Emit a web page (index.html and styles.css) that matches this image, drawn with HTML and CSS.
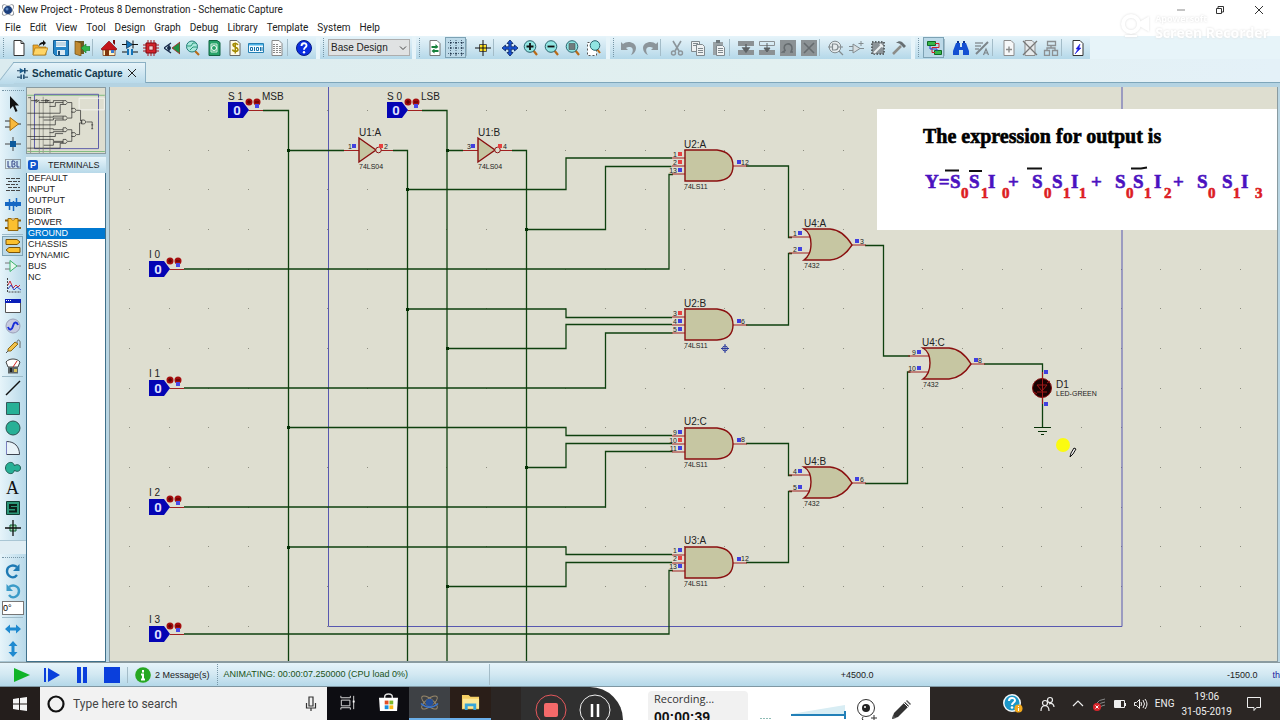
FILE: index.html
```html
<!DOCTYPE html>
<html lang="en">
  <head>
    <meta charset="UTF-8" />
    <meta name="viewport" content="width=device-width, initial-scale=1.0" />
    <title>New Project - Proteus 8 Demonstration - Schematic Capture</title>
    <link rel="stylesheet" href="styles.css">
  </head>
  <body>
    <!-- Title bar -->
    <header class="titlebar">
      <svg class="app-icon" viewBox="0 0 14 14"><g fill="none" stroke="#8a8f96"><ellipse cx="7" cy="7" rx="7" ry="3" transform="rotate(42 7 7)"/><ellipse cx="7" cy="7" rx="7" ry="3" transform="rotate(-42 7 7)"/></g><circle cx="7" cy="7" r="4" fill="#1c3f7c"/><circle cx="6" cy="6" r="1.5" fill="#5f8ac4"/></svg>
      <h1 class="title">New Project - Proteus 8 Demonstration - Schematic Capture</h1>
      <div class="window-buttons">
        <button aria-label="Minimize"><svg viewBox="0 0 10 10"><path d="M1 5h8" stroke="#888"/></svg></button>
        <button aria-label="Restore"><svg viewBox="0 0 10 10"><path d="M1.500 3.500h5v5h-5zM3 3V1.500h5.500V7H7" fill="none" stroke="#333"/></svg></button>
        <button aria-label="Close"><svg viewBox="0 0 10 10"><path d="M1 1l8 8M9 1L1 9" stroke="#333"/></svg></button>
      </div>
    </header>

    <nav class="menubar">
      <a href="#">File</a><a href="#">Edit</a><a href="#">View</a><a href="#">Tool</a><a href="#">Design</a><a href="#">Graph</a><a href="#">Debug</a><a href="#">Library</a><a href="#">Template</a><a href="#">System</a><a href="#">Help</a>
    </nav>

    <!-- Toolbars -->
    <div class="toolbars">
      <div class="toolbar">
        <button aria-label="New"><svg viewBox="0 0 16 16"><path d="M3 .5h7l3 3v12H3z" fill="#fff" stroke="#333"/><path d="M10 .5v3h3" fill="none" stroke="#333"/></svg></button>
        <button aria-label="Open"><svg viewBox="0 0 16 16"><path d="M1 5h5l1 2h7v8H1z" fill="#f0a92c" stroke="#9a6a10" stroke-width=".7"/><path d="M3 8h13l-3 7H1z" fill="#ffd566" stroke="#a97514" stroke-width=".7"/><path d="M7 6c0-3 2-4 4-4V0l3 3-3 3V4C9 4 8 5 7 6z" fill="#111"/></svg></button>
        <button aria-label="Save"><svg viewBox="0 0 16 16"><path d="M.5 .5h15v15h-13l-2-2z" fill="#2586c9" stroke="#145d94"/><path d="M3 1h10v6H3z" fill="#eef6fb"/><path d="M3 3h10M3 5h10" stroke="#8fb6cf"/><path d="M4 10h8v5H4z" fill="#dbe9f2"/><path d="M5 11h2v4H5z" fill="#244d6e"/></svg></button>
        <button aria-label="Exit"><svg viewBox="0 0 16 16"><path d="M1 1h9v13H1z" fill="#6e5a24"/><path d="M1 1l6 2v13l-6-2z" fill="#c08a32" stroke="#6b4a10" stroke-width=".7"/><path d="M7 8l5-4v2.500h4v4h-4V13z" fill="#2fb34a" stroke="#127a2a" stroke-width=".6"/></svg></button>
        <span class="separator"></span>
        <button aria-label="Home"><svg viewBox="0 0 16 16"><path d="M2 8h12v7.500H2z" fill="#fff3c4" stroke="#7c3b16" stroke-width=".8"/><path d="M0 9l8-8 8 8-1 1H1z" fill="#c3161c" stroke="#7b0b0f" stroke-width=".6"/><path d="M12 0h2v5l-2-2z" fill="#7b0b0f"/><path d="M4 10h4v6H4z" fill="#80360f"/><path d="M10 10h3v3h-3z" fill="#3a7bd0"/></svg></button>
        <button aria-label="Schematic Capture"><svg viewBox="0 0 16 16"><path d="M0 4.500h16M0 12h5.500M10.500 12H16" stroke="#111"/><path d="M4.500 .5v8l6-4z" fill="#1473b8" stroke="#092f50" stroke-width=".7"/><path d="M11 .5v8" stroke="#111"/><path d="M5 9h2v6H5zM9 9h2v6H9z" fill="#1473b8"/></svg></button>
        <button aria-label="PCB Layout"><svg viewBox="0 0 16 16"><path d="M5 0v16M8 0v16M11 0v16M0 5h16M0 8h16M0 11h16" stroke="#a3131a"/><path d="M3 3h10v10H3z" fill="#d3232b" stroke="#7d0c12"/><path d="M6 6h4v4H6z" fill="#f6d6d6" stroke="#7d0c12" stroke-width=".6"/></svg></button>
        <button aria-label="3D Visualizer"><svg viewBox="0 0 16 16"><path d="M7 3L0 8l7 5M5 4v8" fill="none" stroke="#182b4a" stroke-width="1.300"/><circle cx="5" cy="8" r="2" fill="#182b4a"/><path d="M16 2v12L8 8z" fill="#1d9044" stroke="#b32020" stroke-width=".8"/></svg></button>
        <button aria-label="Gerber Viewer"><svg viewBox="0 0 16 16"><path d="M10 11l4 4" stroke="#ba6a16" stroke-width="2.200"/><circle cx="7" cy="6.500" r="5.500" fill="#a9e7dc" stroke="#257d78"/><path d="M2 6h4l2-3h3M5 10l3-3h4" fill="none" stroke="#2b9a79"/></svg></button>
        <button aria-label="Design Explorer"><svg viewBox="0 0 16 16"><path d="M3 .5h8l3 2v13H3z" fill="#28a269" stroke="#116340"/><path d="M5 4h6v8H5z" fill="none" stroke="#d6f4e4"/><circle cx="8" cy="8" r="2.500" fill="#28a269" stroke="#fff"/></svg></button>
        <button aria-label="Bill of Materials"><svg viewBox="0 0 16 16"><path d="M3 .5h7l3 3v12H3z" fill="#fffbe6" stroke="#666"/><path d="M11 5c-1-2-5-2-5 0s5 2 5 4.500-5 2.500-5.500 0M8.300 2.500v11" fill="none" stroke="#a38a00" stroke-width="1.500"/></svg></button>
        <button aria-label="Source Code"><svg viewBox="0 0 16 16"><path d="M.5 3.500h15v9H.5z" fill="#f3fbff" stroke="#2580b5"/><path d="M1 4h14v1.500H1z" fill="#4ab2e6"/><path d="M2.500 7.500h2v3h-2zM6.500 7v4M8.500 7.500h2v3h-2zM12.500 7v4M14 7v4" fill="none" stroke="#1771a8"/></svg></button>
        <button aria-label="Project Notes"><svg viewBox="0 0 16 16"><path d="M3 .5h7l3 3v12H3z" fill="#fafafa" stroke="#888"/><path d="M4 4.500h5M4 6.500h8M4 8.500h8M4 10.500h8M4 12.500h8" stroke="#888" stroke-dasharray="2 1"/></svg></button>
        <span class="separator"></span>
        <button aria-label="Help"><svg viewBox="0 0 16 16"><circle cx="8" cy="8" r="7.500" fill="#0a2de0" stroke="#061a86"/><path d="M5.500 6c0-3.500 5-3.500 5-.6 0 2-2.500 2-2.500 4.300" fill="none" stroke="#fff" stroke-width="1.900"/><circle cx="8" cy="12.200" r="1.200" fill="#fff"/></svg></button>
      </div>

      <div class="toolbar">
        <label class="variant">
          <select aria-label="Design variant"><option>Base Design</option></select>
          <svg viewBox="0 0 8 8"><path d="M1 2.500l3 3 3-3" fill="none" stroke="#444"/></svg>
        </label>
      </div>

      <div class="toolbar">
        <button aria-label="Redraw"><svg viewBox="0 0 16 16"><path d="M3 .5h7l3 3v12H3z" fill="#fff" stroke="#777"/><path d="M4.500 6h4V4l3 3-3 2V8h-4zM11.500 10h-4V8.500l-3 2.500 3 2.500V12h4z" fill="#15803a"/></svg></button>
        <button class="pressed" aria-label="Toggle grid"><svg viewBox="0 0 16 16"><path d="M0 2.500h16M0 8h16M0 13.500h16M2.500 0v16M8 0v16M13.500 0v16" stroke="#31475e" stroke-dasharray="1 1.500" stroke-width=".8"/><path d="M2 2h1.500v1.500H2zM7.300 2h1.500v1.500H7.300zM13 2h1.500v1.500H13zM2 7.300h1.500v1.500H2zM7.300 7.300h1.500v1.500H7.300zM13 7.300h1.500v1.500H13zM2 13h1.500v1.500H2zM7.300 13h1.500v1.500H7.300zM13 13h1.500v1.500H13z" fill="#1f3348"/></svg></button>
        <span class="separator"></span>
        <button aria-label="Origin"><svg viewBox="0 0 16 16"><path d="M4.500 4.500h7v7h-7z" fill="#ffe326" stroke="#555"/><path d="M0 8h16M8 0v16" stroke="#111"/></svg></button>
        <span class="separator"></span>
        <button aria-label="Pan"><svg viewBox="0 0 16 16"><path d="M8 0l3 3.500H9.200v3.300h3.300V5L16 8l-3.500 3V9.200H9.200v3.300H11L8 16l-3-3.500h1.800V9.200H3.500V11L0 8l3.500-3v1.800h3.300V3.500H5z" fill="#1854d8" stroke="#071f5c" stroke-width=".8"/></svg></button>
        <button aria-label="Zoom in"><svg viewBox="0 0 16 16"><path d="M10 10l4 5" stroke="#ba6a16" stroke-width="2.200"/><circle cx="7" cy="6.500" r="5.800" fill="#90e5e2" stroke="#27636c"/><path d="M3.500 6.500h7M7 3v7" stroke="#111" stroke-width="1.800"/></svg></button>
        <button aria-label="Zoom out"><svg viewBox="0 0 16 16"><path d="M10 10l4 5" stroke="#ba6a16" stroke-width="2.200"/><circle cx="7" cy="6.500" r="5.800" fill="#90e5e2" stroke="#27636c"/><path d="M3.500 6.500h7" stroke="#111" stroke-width="1.800"/></svg></button>
        <button aria-label="Zoom all"><svg viewBox="0 0 16 16"><path d="M10 10l4 5" stroke="#ba6a16" stroke-width="2.200"/><circle cx="7" cy="6.500" r="5.800" fill="#90e5e2" stroke="#27636c"/><path d="M4 3.500h6v6H4z" fill="#707b7c" stroke="#4a5556" stroke-width=".6"/></svg></button>
        <button aria-label="Zoom area"><svg viewBox="0 0 16 16"><path d="M1.500 2.500h9v13h-9z" fill="#fff" stroke="#555" stroke-dasharray="2 2"/><path d="M11 9l3 4" stroke="#ba6a16" stroke-width="2"/><circle cx="9" cy="5.500" r="4.800" fill="#90e5e2" stroke="#27636c"/></svg></button>
      </div>

      <div class="toolbar">
        <button aria-label="Undo"><svg viewBox="0 0 16 16"><path d="M0 2l2 2c4-4 13-2 13 4 0 3-2 6-5 7 3-4 2-8-1-8-2 0-3 0-4 1l2 2H0z" fill="#8c959b"/></svg></button>
        <button aria-label="Redo"><svg viewBox="0 0 16 16"><path d="M16 2l-2 2C10 0 1 2 1 8c0 3 2 6 5 7-3-4-2-8 1-8 2 0 3 0 4 1l-2 2h7z" fill="#8c959b"/></svg></button>
        <span class="separator"></span>
        <button aria-label="Cut"><svg viewBox="0 0 16 16"><path d="M4 1l6 10M12 1L6 11" stroke="#8c959b" stroke-width="1.600"/><circle cx="4.500" cy="13" r="2" fill="none" stroke="#8c959b" stroke-width="1.400"/><circle cx="11.500" cy="13" r="2" fill="none" stroke="#8c959b" stroke-width="1.400"/></svg></button>
        <button aria-label="Copy"><svg viewBox="0 0 16 16"><path d="M1.500 1.500h8v10h-8z" fill="#eef1f2" stroke="#7f888d"/><path d="M6.500 4.500h6l2 2v9h-8z" fill="#eef1f2" stroke="#7f888d"/><path d="M3 3.500h5M3 5.500h3M8 8.500h5M8 10.500h5M8 12.500h5" stroke="#7f888d"/></svg></button>
        <button aria-label="Paste"><svg viewBox="0 0 16 16"><path d="M2 2h10v13H2z" fill="#9aa2a6"/><path d="M5 0h4v3H5z" fill="#6f787c"/><path d="M5.500 5.500h6l2 2v8h-8z" fill="#f1f3f4" stroke="#7f888d"/><path d="M7 8.500h5M7 10.500h5M7 12.500h5" stroke="#7f888d"/></svg></button>
        <span class="separator"></span>
        <button aria-label="Block copy"><svg viewBox="0 0 16 16"><path d="M0 1h16v5H0zM0 10h16v5H0z" fill="#8b9194"/><path d="M8 4v6M5 8l3 4 3-4z" fill="#5d6265" stroke="#5d6265" stroke-width="1.400"/></svg></button>
        <button aria-label="Block move"><svg viewBox="0 0 16 16"><path d="M.5 1.500h15v4H.5z" fill="none" stroke="#8b9194"/><path d="M0 10h16v5H0z" fill="#8b9194"/><path d="M8 3v7M5 8l3 4 3-4z" fill="#5d6265" stroke="#5d6265"/></svg></button>
        <button aria-label="Block rotate"><svg viewBox="0 0 16 16"><path d="M0 0h16v16H0z" fill="#8b9194"/><path d="M5 12H3l2-1.500C1 3 13 1 12 9l-1 3h2" fill="none" stroke="#666c6f" stroke-width="1.600"/></svg></button>
        <button aria-label="Block delete"><svg viewBox="0 0 16 16"><path d="M0 0h16v16H0z" fill="#8b9194"/><path d="M3 3l10 10M13 3L3 13" stroke="#666c6f" stroke-width="1.600"/></svg></button>
        <span class="separator"></span>
        <button aria-label="Pick parts"><svg viewBox="0 0 16 16"><circle cx="7" cy="7" r="5.800" fill="#e6ecee" stroke="#838c90"/><path d="M0 7h4M4.500 4v6h2.500c4 0 4-6 0-6zM10 7h5M11 11l4 4" fill="none" stroke="#838c90" stroke-width="1.200"/></svg></button>
        <button aria-label="Make device"><svg viewBox="0 0 16 16"><path d="M4 4v9l7-4.500zM0 6.500h4M0 10.500h4M11 8.500h4" fill="#d7dee1" stroke="#838c90"/><path d="M12 1v5M9.500 3.500h5" stroke="#838c90"/></svg></button>
        <button aria-label="Packaging tool"><svg viewBox="0 0 16 16"><path d="M2 2h12v12H2z" fill="#8c9499" stroke="#5d6568" stroke-width="2" stroke-dasharray="1.500 1.500"/><path d="M4 13l7-7M10 4l3 3" stroke="#e9eef0" stroke-width="2"/></svg></button>
        <button aria-label="Decompose"><svg viewBox="0 0 16 16"><path d="M2 14l8-8" stroke="#8c8c88" stroke-width="2.500"/><path d="M5 3c3-3 6-2 8 1l2 2-2 2-3-3C8 3 7 3 5 3z" fill="#666e72"/></svg></button>
      </div>

      <div class="toolbar">
        <button class="pressed" aria-label="Wire autorouter"><svg viewBox="0 0 16 16"><path d="M1.500 1.500h8v4h-8zM8.500 10.500h7v4h-7z" fill="#38b54a" stroke="#0e6b20"/><path d="M9 3.500h4v4H6v5h3" fill="none" stroke="#d0202a"/><path d="M4 6v3h7v2" fill="none" stroke="#2336d0"/></svg></button>
        <span class="separator"></span>
        <button aria-label="Search and tag"><svg viewBox="0 0 16 16"><path d="M3 3h4v4h2V3h4l3 8v4H10v-5H6v5H0v-4z" fill="#1450d2"/><path d="M4 1h2v2H4zM10 1h2v2h-2z" fill="#0b2f86"/></svg></button>
        <button aria-label="Property assignment"><svg viewBox="0 0 16 16"><path d="M1 3h8M1 6h6M1 9h4" stroke="#8c959b" stroke-width="1.500"/><path d="M2 14L14 2" stroke="#7c858a" stroke-width="2"/><path d="M9.500 15l2.500-6 2.500 6M10 13h4" fill="none" stroke="#7c858a" stroke-width="1.200"/></svg></button>
        <span class="separator"></span>
        <button aria-label="New sheet"><svg viewBox="0 0 16 16"><path d="M3 .5h7l3 3v12H3z" fill="#f6f8f9" stroke="#8b8b8b"/><path d="M5 9.500h6M8 6.500v6" stroke="#8b8b8b" stroke-width="1.400"/></svg></button>
        <button aria-label="Remove sheet"><svg viewBox="0 0 16 16"><path d="M3 .5h7l3 3v12H3z" fill="#e6eaec" stroke="#8b8b8b"/><path d="M1 1l14 14M15 1L1 15" stroke="#777" stroke-width="1.300"/></svg></button>
        <button aria-label="Parent sheet"><svg viewBox="0 0 16 16"><path d="M4.500 1.500h8v4h-8zM1.500 10.500h5v5h-5zM9.500 10.500h5v5h-5zM8 6v2M4 10V8h8v2" fill="none" stroke="#8b8f92" stroke-width="1.300"/></svg></button>
        <span class="separator"></span>
        <button aria-label="Electrical rules"><svg viewBox="0 0 16 16"><path d="M3 .5h7l3 3v12H3z" fill="#fff" stroke="#333"/><path d="M10 4L6 9h2l-3 5 6-6H9z" fill="#1a1ae0" stroke="#1a1ae0" stroke-width=".5"/></svg></button>
      </div>
    </div>

    <!-- Document tabs -->
    <div class="tabstrip">
      <div class="tab">
        <svg class="tab-icon" viewBox="0 0 12 14"><path d="M0 4h12M0 11h4M8 11h4" stroke="#0b2e4c"/><path d="M3 1v6l5-3z" fill="#1a5c8c"/><path d="M8.500 1v6M4.500 8v5M7.500 8v5" stroke="#0b3d66" stroke-width="1.500"/></svg>
        <span>Schematic Capture</span>
        <button aria-label="Close tab"><svg viewBox="0 0 10 10"><path d="M1 1l8 8M9 1L1 9" stroke="#222"/></svg></button>
      </div>
    </div>

    <main class="workspace">
      <!-- Mode tools -->
      <div class="modes">
        <div class="modebar">
          <button aria-label="Selection"><svg viewBox="0 0 16 16"><path d="M5 0v13l3-3 2.500 6 2-1L10 9.500h4z" fill="#111"/></svg></button>
          <button aria-label="Component"><svg viewBox="0 0 16 16"><path d="M0 5h5M0 11h5M13 8h3" stroke="#333"/><path d="M5 1.500v13L13.500 8z" fill="#f9b93c" stroke="#a56c10"/></svg></button>
          <button aria-label="Junction dot"><svg viewBox="0 0 16 16"><path d="M0 8h16M8 1v14" stroke="#444"/><path d="M5 5h6v6H5z" fill="#0d5a9c"/></svg></button>
          <button aria-label="Wire label"><svg viewBox="0 0 16 16"><path d="M.5 3.500h15v9H.5z" fill="none" stroke="#555" stroke-dasharray="1 1"/><path d="M3 5v6h2.500M7 5v6h1.500c2 0 2-3 0-3 2 0 2-3 0-3zM12 5v6h2.500" fill="none" stroke="#2a3a80"/></svg></button>
          <button aria-label="Text script"><svg viewBox="0 0 16 16"><path d="M1 2.500h14M3 5.500h12M1 8.500h12M3 11.500h12M1 14.500h14" stroke="#444" stroke-dasharray="4 1"/></svg></button>
          <button aria-label="Bus"><svg viewBox="0 0 16 16"><path d="M0 8h16" stroke="#1668c4" stroke-width="4"/><path d="M4.500 3v11M8.500 5v10M11.500 2v9" stroke="#1668c4" stroke-width="1.500"/></svg></button>
          <button aria-label="Subcircuit"><svg viewBox="0 0 16 16"><path d="M0 4.500h16M0 12h16" stroke="#8a5c0a" stroke-width="2"/><path d="M3 2.500h10v12H3z" fill="#fbc02f" stroke="#94670d"/><path d="M6 2.500c0 2 4 2 4 0" fill="#fff" stroke="#94670d"/></svg></button>
          <span class="separator"></span>
          <button class="pressed" aria-label="Terminals"><svg viewBox="0 0 16 16"><path d="M1 1.500h11l3 2.500-3 2.500H1zM15 9.500H4L1 12l3 2.500h11z" fill="#fbc02f" stroke="#7c5509"/></svg></button>
          <button aria-label="Device pins"><svg viewBox="0 0 16 16"><path d="M0 5h5M0 11h5M12 8h4" stroke="#777"/><path d="M5 2.500v11l7-5.500z" fill="#e7f7ee" stroke="#3bb36b"/></svg></button>
          <button aria-label="Graph"><svg viewBox="0 0 16 16"><path d="M2.500 0v14H16" fill="none" stroke="#444" stroke-dasharray="2 1"/><path d="M3 7l2-4 3 7 3-3 2 2 2-2" fill="none" stroke="#cf2a3a"/><path d="M3 11l3-4 3 5 3-3 4 3" fill="none" stroke="#3546c4"/></svg></button>
          <button aria-label="Tape"><svg viewBox="0 0 16 16"><path d="M.5 1.500h15v13H.5z" fill="#fff" stroke="#555"/><path d="M0 1h16v4H0z" fill="#0b1fb8"/><path d="M1 2h1v1H1zM3 2h1v1H3zM5 2h1v1H5z" fill="#fff"/></svg></button>
          <button aria-label="Generator"><svg viewBox="0 0 16 16"><circle cx="8" cy="8" r="7" fill="#c7cbe0" stroke="#9aa0b8"/><path d="M3 9c1.500 4 4 3 5-1s3.500-5 5-1" fill="none" stroke="#1a2fd8" stroke-width="2"/></svg></button>
          <button aria-label="Probe"><svg viewBox="0 0 16 16"><path d="M1 15l3-3" stroke="#555"/><path d="M3 11l7-7 3 2-7 7-3 0z" fill="#f2c14a" stroke="#8d6a14"/><path d="M12 5c0-5 4-3 3 1v4" fill="none" stroke="#666"/></svg></button>
          <button aria-label="Instruments"><svg viewBox="0 0 16 16"><path d="M1 4c3-4 11-4 14 0l-2 5H3z" fill="#fff" stroke="#444"/><path d="M8 9l4-6" stroke="#d02020"/><path d="M3 9h10v6.500H3z" fill="#5d6466"/><path d="M5 10h2v4H5z" fill="#222"/><path d="M9 11h3v3H9z" fill="#d8c15a"/></svg></button>
          <span class="separator"></span>
          <button aria-label="Line"><svg viewBox="0 0 16 16"><path d="M1 15L15 1" stroke="#111" stroke-width="1.500"/></svg></button>
          <button aria-label="Box"><svg viewBox="0 0 16 16"><path d="M1.500 2.500h13v12h-13z" fill="#27b096" stroke="#34585a"/></svg></button>
          <button aria-label="Circle"><svg viewBox="0 0 16 16"><circle cx="8" cy="8" r="7" fill="#27b096" stroke="#2a5450"/></svg></button>
          <button aria-label="Arc"><svg viewBox="0 0 16 16"><path d="M1.500 1.500c8 0 13 5 13 13h-13" fill="#e9f3f8" stroke="#3d4450"/><path d="M1.500 14.500v-13" stroke="#7a80c0"/></svg></button>
          <button aria-label="Path"><svg viewBox="0 0 16 16"><path d="M9.500 6c1-2 6-2 6 2s-5 4-6 2c-1 6-9 4-9-2s8-8 9-2z" fill="#27b096" stroke="#1f5f55"/></svg></button>
          <button class="glyph" aria-label="Text">A</button>
          <button aria-label="Symbol"><svg viewBox="0 0 16 16"><path d="M1.500 1.500h13v13h-13z" fill="#2c9678" stroke="#123d33"/><path d="M12 5H5v3h6v3.500H4" fill="none" stroke="#0a2019" stroke-width="2"/></svg></button>
          <button aria-label="Marker"><svg viewBox="0 0 16 16"><path d="M5 5h6v6H5z" fill="#9fd8b4" stroke="#0c5a2f"/><path d="M0 8h16M8 0v16" stroke="#111" stroke-width="1.300"/></svg></button>
        </div>
        <div class="modebar rotation">
          <button aria-label="Rotate clockwise"><svg viewBox="0 0 16 16"><path d="M12 12c-4 5-10 1-10-4s6-7 10-4" fill="none" stroke="#1e7ab4" stroke-width="2.400"/><path d="M14.500 1v7H8z" fill="#1e7ab4"/></svg></button>
          <button aria-label="Rotate anti-clockwise"><svg viewBox="0 0 16 16"><path d="M4 12c4 5 10 1 10-4S8 1 4 4" fill="none" stroke="#3b9bc8" stroke-width="2.400"/><path d="M1.500 1v7H8z" fill="#3b9bc8"/></svg></button>
          <input type="text" value="0°" aria-label="Angle" />
          <span class="separator"></span>
          <button aria-label="Mirror horizontal"><svg viewBox="0 0 16 16"><path d="M0 8l5-4.500v3h6v-3L16 8l-5 4.500v-3H5v3z" fill="#1f8ad0"/></svg></button>
          <button aria-label="Mirror vertical"><svg viewBox="0 0 16 16"><path d="M8 0l4.500 5h-3v6h3L8 16l-4.500-5h3V5h-3z" fill="#1f8ad0"/></svg></button>
        </div>
      </div>

      <!-- Overview and object selector -->
      <aside class="sidebar">
        <svg class="overview" viewBox="0 0 80 67">
          <path d="M0 7.500h80M0 65.500h80" stroke="#7dbb7d"/>
          <path d="M7.500 6.500h66v56h-66z" fill="none" stroke="#5a5aa8"/>
          <path d="M53.500 10.500h26v12h-26z" fill="none" stroke="#f4f4ee"/>
          <g fill="none" stroke="#9a9a90"><path d="M3.500 9v58M12.500 12v55M16.500 9v58M23.500 12v55"/></g>
          <g fill="none" stroke="#222" stroke-width=".7">
            <path d="M1 10h3M4 13h6M9 12v3l3-2zM14 13h9M19 12v3l3-2zM12 15h15v-2h10M23 19h6v-4h8M0 26h34v-9h3M12 30h15v-1h10M17 33h10v-2h10M0 38h29v-5h8M4 42h23v1h10M23 46h4v-1h10M0 50h29v-3h8M4 53h23v2h10M17 59h10v-3h10M0 62h34v-5h3"/>
            <path d="M37 13h3q3 2 0 4h-3zM37 29h3q3 2 0 4h-3zM37 41h3q3 2 0 4h-3zM37 53h3q3 2 0 4h-3zM46 21h3q3 2 0 4h-3zM46 46h3q3 2 0 4h-3zM56 33h3q3 2 0 4h-3z"/>
            <path d="M42 15h4v7M42 31h4v-7M42 43h4v4M42 55h4v-6M51 23h4v11h2M51 48h3V36h3M61 35h6v7M66 38h2M66 42h2"/>
          </g>
        </svg>
        <div class="list-head"><button aria-label="Pick terminals">P</button><label for="terminals">TERMINALS</label></div>
        <select id="terminals" class="terminals" size="10">
          <option>DEFAULT</option>
          <option>INPUT</option>
          <option>OUTPUT</option>
          <option>BIDIR</option>
          <option>POWER</option>
          <option selected>GROUND</option>
          <option>CHASSIS</option>
          <option>DYNAMIC</option>
          <option>BUS</option>
          <option>NC</option>
        </select>
      </aside>

      <!-- Schematic sheet -->
      <div class="sheet">
        <svg class="schematic">
          <defs>
            <pattern id="dots" x="129" y="110" width="119" height="119" patternUnits="userSpaceOnUse">
              <path d="M0 0h1v1H0zM40 0h1v1h-1zM79 0h1v1h-1zM0 40h1v1H0zM40 40h1v1h-1zM79 40h1v1h-1zM0 79h1v1H0zM40 79h1v1h-1zM79 79h1v1h-1z" fill="#8d8d80"/>
            </pattern>
            <g id="port">
              <path d="M0-8h15l6 8-6 8H0z" fill="#0404b4"/>
              <path d="M21 .5h14" stroke="#a02020"/>
              <circle cx="21" cy="-8" r="3.500" fill="#a40d0d"/><circle cx="29" cy="-8" r="3.500" fill="#a40d0d"/>
              <path d="M21-10v4M19-8h4M27-8h4" stroke="#4d0000"/>
              <path d="M27-6h4v4h-4z" fill="#4848e8"/>
              <text class="logic" x="9" y="5">0</text>
            </g>
            <g id="not">
              <path class="pin" d="M-15 .5H0M22 .5h12"/>
              <path class="part" d="M0-12L17 0 0 12z"/>
              <circle cx="19.500" cy="0" r="2.800" fill="#deded0" stroke="#8a0f0f"/>
              <path d="M-7-6h4v4h-4z" fill="#4040e0"/><path d="M20-6h4v4h-4z" fill="#e84040"/>
            </g>
            <g id="and">
              <path class="pin" d="M-13 8H0M-13 16H0M-13 24H0M48 16h14"/>
              <path class="part" d="M0 0h32q16 2 16 16T32 31H0z"/>
              <path d="M52 10h4v4h-4z" fill="#4040e0"/>
            </g>
            <g id="or">
              <path class="pin" d="M-15 8H7M-15 24H7M48 16h14"/>
              <path class="part" d="M0 0h26q13 1 22 16-9 14-22 15H0q7-5 7-16T0 0z"/>
              <path d="M-6 2h4v4h-4zM-6 18h4v4h-4zM51 10h4v4h-4z" fill="#4040e0"/>
            </g>
          </defs>
          <g transform="translate(-110 -87)">
            <rect x="110" y="87" width="1200" height="600" fill="url(#dots)"/>
            <path d="M328.500 80v546.500h793.500V80" fill="none" stroke="#5858b0"/>

            <!-- Wires -->
            <g class="wires">
              <path d="M263 110.500h25.500V670M422 110.500h25V670M288.500 150.500H344M393 150.500h14.500V670M447 150.500h16M512 150.500h14.500V670"/>
              <path d="M407.500 189.500h158.500v-31.500h106M526.500 229.500h79v-63h66M184 269h485v-94.500h4"/>
              <path d="M407.500 309h158.500v8.500h106M447 348.500h119v-24h106M184 388h421.500v-55h67"/>
              <path d="M288.500 427.500h277.500v8h106M526.500 467.500h39.500v-24h106M184 507h421.500v-55.500h67"/>
              <path d="M288.500 547h277.500v7.500h106M447 586.500h119v-24h106M184 634h485v-63.500h4"/>
              <path d="M746 166h42.500v71.500H792M746 325h42.500v-71.500H792M746 443.500h42.500v32H792M746 562.500h42.500v-71H792"/>
              <path d="M865 245.500h18.500V356H910M865 483.500h42.500v-111.500h3M984 364h58.500v15M1042.500 398v29"/>
            </g>
            <g fill="#043004">
              <path d="M287 149h3v3h-3zM446 149h3v3h-3zM406 188h3v3h-3zM525 228h3v3h-3zM406 308h3v3h-3zM446 347h3v3h-3zM287 426h3v3h-3zM525 466h3v3h-3zM287 546h3v3h-3zM446 585h3v3h-3z"/>
            </g>

            <!-- Logic inputs -->
            <use href="#port" x="228" y="110"/><use href="#port" x="387" y="110"/>
            <use href="#port" x="149" y="269"/><use href="#port" x="149" y="388"/><use href="#port" x="149" y="507"/><use href="#port" x="149" y="634"/>

            <!-- Gates -->
            <use href="#not" x="359" y="150"/><use href="#not" x="478" y="150"/>
            <use href="#and" x="685" y="150"/><use href="#and" x="685" y="309"/><use href="#and" x="685" y="428"/><use href="#and" x="685" y="547"/>
            <use href="#or" x="804" y="229"/><use href="#or" x="804" y="467"/><use href="#or" x="923" y="348"/>
            <path d="M678 152h4v4h-4zM678 160h4v4h-4zM678 311h4v4h-4zM678 438h4v4h-4zM678 556h4v4h-4z" fill="#e84040"/>
            <path d="M678 168h4v4h-4zM678 319h4v4h-4zM678 327h4v4h-4zM678 430h4v4h-4zM678 446h4v4h-4zM678 548h4v4h-4zM678 564h4v4h-4zM1044 370h4v4h-4zM1044 402h4v4h-4z" fill="#4040e0"/>

            <g class="names">
              <text x="228" y="100">S 1</text><text x="262" y="100">MSB</text>
              <text x="387" y="100">S 0</text><text x="421" y="100">LSB</text>
              <text x="149" y="258">I 0</text><text x="149" y="377">I 1</text><text x="149" y="496">I 2</text><text x="149" y="623">I 3</text>
              <text x="359" y="136">U1:A</text><text x="478" y="136">U1:B</text>
              <text x="684" y="148">U2:A</text><text x="684" y="307">U2:B</text><text x="684" y="425">U2:C</text><text x="684" y="544">U3:A</text>
              <text x="804" y="227">U4:A</text><text x="804" y="465">U4:B</text><text x="922" y="346">U4:C</text>
              <text x="1056" y="388">D1</text>
            </g>
            <g class="types">
              <text x="359" y="169">74LS04</text><text x="478" y="169">74LS04</text>
              <text x="684" y="189">74LS11</text><text x="684" y="348">74LS11</text><text x="684" y="467">74LS11</text><text x="684" y="586">74LS11</text>
              <text x="804" y="268">7432</text><text x="804" y="506">7432</text><text x="923" y="387">7432</text>
              <text x="1056" y="396">LED-GREEN</text>
              <text x="348" y="149">1</text><text x="384" y="149">2</text><text x="467" y="149">3</text><text x="503" y="149">4</text>
              <text x="741" y="165">12</text><text x="741" y="324">6</text><text x="741" y="442">8</text><text x="741" y="561">12</text>
              <text x="860" y="244">3</text><text x="860" y="482">6</text><text x="978" y="363">8</text>
            </g>
            <g class="types pins-left">
              <text x="677" y="157">1</text><text x="677" y="165">2</text><text x="677" y="173">13</text>
              <text x="677" y="316">3</text><text x="677" y="324">4</text><text x="677" y="332">5</text>
              <text x="677" y="435">9</text><text x="677" y="443">10</text><text x="677" y="451">11</text>
              <text x="677" y="553">1</text><text x="677" y="561">2</text><text x="677" y="569">13</text>
              <text x="797" y="236">1</text><text x="797" y="252">2</text><text x="797" y="474">4</text><text x="797" y="490">5</text>
              <text x="916" y="355">9</text><text x="916" y="371">10</text>
            </g>

            <!-- LED and ground -->
            <circle cx="1042" cy="388" r="9.500" fill="#1a0202" stroke="#8a0f0f"/>
            <path d="M1042.500 372v32M1037 385h10l-5 6zM1037 392h10M1047 383l3-2M1034 392l3 2" fill="none" stroke="#a01818"/>
            <path d="M1034 427.500h17M1038 431.500h9M1041 434.500h3" stroke="#063006"/>

            <!-- Origin, pointer -->
            <g fill="none" stroke="#2a3a9c"><circle cx="725" cy="348.500" r="2.500"/><path d="M721 348.500h8M725 344v9"/></g>
            <circle cx="1063" cy="445" r="7" fill="#fbfb10"/>
            <path d="M1070 457l1-4 3-5 2 1-3 5-3 3z" fill="#eee" stroke="#111"/>

            <!-- Output expression -->
            <rect x="877" y="109" width="400" height="121" fill="#fff"/>
            <text class="caption" x="923" y="143">The expression for output is</text>
            <g class="formula">
              <text x="925" y="188">Y=</text><text x="950" y="188">S</text><text x="969" y="188">S</text><text x="988" y="188">I</text><text x="1008" y="188">+</text>
              <text x="1032" y="188">S</text><text x="1052" y="188">S</text><text x="1071" y="188">I</text><text x="1091" y="188">+</text>
              <text x="1115" y="188">S</text><text x="1133" y="188">S</text><text x="1154" y="188">I</text><text x="1173" y="188">+</text>
              <text x="1197" y="188">S</text><text x="1222" y="188">S</text><text x="1241" y="188">I</text>
            </g>
            <g class="formula index">
              <text x="961" y="198">0</text><text x="981" y="198">1</text><text x="1002" y="198">0</text>
              <text x="1044" y="198">0</text><text x="1063" y="198">1</text><text x="1079" y="198">1</text>
              <text x="1126" y="198">0</text><text x="1144" y="198">1</text><text x="1164" y="198">2</text>
              <text x="1208" y="198">0</text><text x="1233" y="198">1</text><text x="1255" y="198">3</text>
            </g>
            <path d="M945 170.500h14M969 171h13M1027 168.500h15M1131 168.500h10l6-1" fill="none" stroke="#111" stroke-width="2"/>
          </g>
        </svg>
      </div>
    </main>

    <!-- Simulation status -->
    <footer class="statusbar">
      <div class="controls">
        <button aria-label="Play"><svg viewBox="0 0 16 16"><path d="M0 1l16 7-16 7z" fill="#10b428"/></svg></button>
        <button aria-label="Step"><svg viewBox="0 0 16 16"><path d="M0 1h2v14H0zM4 1l12 7-12 7z" fill="#0a3fdc"/></svg></button>
        <button aria-label="Pause"><svg viewBox="0 0 16 16"><path d="M3 0h4v16H3zM9 0h4v16H9z" fill="#0a3fdc"/></svg></button>
        <button aria-label="Stop"><svg viewBox="0 0 16 16"><path d="M0 0h16v16H0z" fill="#0a3fdc"/></svg></button>
      </div>
      <button class="messages"><svg viewBox="0 0 16 16"><circle cx="8" cy="8" r="7.800" fill="#27a822"/><path d="M8 3v2.500M6 7.500h2v5M6 12.500h4" fill="none" stroke="#fff" stroke-width="2"/></svg>2 Message(s)</button>
      <span class="sim">ANIMATING: 00:00:07.250000 (CPU load 0%)</span>
      <span class="coord">+4500.0</span>
      <span class="coord">-1500.0</span>
      <span class="unit">th</span>
    </footer>

    <!-- Taskbar -->
    <div class="taskbar">
      <button class="start" aria-label="Start"><svg viewBox="0 0 14 14"><path d="M0 2l6-1v5.500H0zM7 1l7-1v6.500H7zM0 7.500h6V13l-6-1zM7 7.500h7V14l-7-1z" fill="#f4f4f4"/></svg></button>
      <label class="search">
        <svg class="cortana" viewBox="0 0 18 18"><circle cx="9" cy="9" r="7.500" fill="none" stroke="#111" stroke-width="2.200"/></svg>
        <input type="text" placeholder="Type here to search" aria-label="Search" />
        <svg class="mic" viewBox="0 0 12 16"><path d="M4 1h4v9H4zM1.500 7v5h9V7M6 12v3" fill="none" stroke="#333" stroke-width="1.200"/></svg>
      </label>
      <button class="app" aria-label="Task view"><svg viewBox="0 0 20 20"><path d="M3.500 7.500h9v6h-9zM3 3v2h10V3M3 17.500v-2h10v2M16.500 3v14" fill="none" stroke="#ddd"/><path d="M15.500 8h2v2h-2z" fill="#fff"/></svg></button>
      <button class="app" aria-label="Store"><svg viewBox="0 0 20 20"><path d="M6 6V4c0-4 8-4 8 0v2" fill="none" stroke="#ddd" stroke-width="1.500"/><path d="M0 5h20l-1 14H1z" fill="#fff"/><path d="M6 8h4v4H6z" fill="#e34f26"/><path d="M11 8h4v4h-4z" fill="#7db928"/><path d="M6 13h4v4H6z" fill="#1a8fe0"/><path d="M11 13h4v4h-4z" fill="#fbb917"/></svg></button>
      <button class="app open active" aria-label="Proteus"><svg viewBox="0 0 20 20"><g fill="none" stroke="#98886a"><ellipse cx="10" cy="10" rx="10" ry="4" transform="rotate(38 10 10)"/><ellipse cx="10" cy="10" rx="10" ry="4" transform="rotate(-38 10 10)"/></g><path d="M1 11q9 8 18 0" fill="none" stroke="#3a76d2" stroke-width="1.500"/><circle cx="10" cy="10" r="4" fill="#254f98"/></svg></button>
      <button class="app open" aria-label="File Explorer"><svg viewBox="0 0 20 20"><path d="M1 2h7l2 2h9v13H1z" fill="#f5cf63"/><path d="M2 6h17v10H2z" fill="#fde896"/><path d="M4 18v-7h12v7h-3v-4H7v4z" fill="#38a6d8"/></svg></button>

      <section class="recorder">
        <div class="rec-buttons">
          <button aria-label="Stop recording"><svg viewBox="0 0 32 32"><circle cx="16" cy="16" r="15" fill="none" stroke="#e4585c"/><rect x="9" y="9" width="14" height="14" rx="2" fill="#f46a6a"/></svg></button>
          <button aria-label="Pause recording"><svg viewBox="0 0 32 32"><circle cx="16" cy="16" r="15" fill="none" stroke="#eee"/><path d="M13 10v13M19 10v13" stroke="#fff" stroke-width="2.500"/></svg></button>
        </div>
        <div class="rec-time"><span>Recording...</span><b>00:00:39</b></div>
        <svg class="level" viewBox="0 0 90 32"><path d="M2 32h12" stroke="#8fbcb5" stroke-width="2" stroke-dasharray="2 1"/><path d="M33 27l54-9v9z" fill="#d8edf4"/><path d="M33 28h54M87 24v8" stroke="#2280b8" stroke-width="2"/></svg>
        <svg class="webcam" viewBox="0 0 20 24"><circle cx="9" cy="9" r="8.500" fill="none" stroke="#333"/><circle cx="9" cy="9" r="4" fill="#222"/><circle cx="8" cy="8" r="1" fill="#fff"/><path d="M6 18q-3 4 5 4M14 19h6M17 16v6" fill="none" stroke="#333"/></svg>
        <svg class="pen" viewBox="0 0 20 20"><path d="M1 19l2-6L14 2l4 4L7 17z" fill="#333"/><path d="M15 1l1-1 4 4-1 1zM1 19l1-4 3 3z" fill="#555"/><path d="M13 3l4 4" stroke="#fff"/></svg>
      </section>

      <div class="tray">
        <svg viewBox="0 0 20 20"><circle cx="9" cy="9" r="9" fill="#f3f8fa"/><circle cx="9" cy="9" r="7.500" fill="#1b97c9"/><path d="M6 7c0-4 6-4 6-.5 0 2-3 2-3 4.500" fill="none" stroke="#fff" stroke-width="2"/><circle cx="9" cy="13.500" r="1.300" fill="#fff"/><circle cx="15.500" cy="14.500" r="4" fill="#f3a91c"/><path d="M15.500 12v1M15.500 14v3" stroke="#fff"/></svg>
        <svg viewBox="0 0 20 20"><g fill="none" stroke="#eee" stroke-width="1.200"><circle cx="8" cy="9" r="2.500"/><path d="M4 17c0-7 8-7 8 0"/><circle cx="13" cy="6" r="2.500"/><path d="M12 10c3-2 5 1 5 3"/></g></svg>
        <svg class="small" viewBox="0 0 12 16"><path d="M1 10l5-5 5 5" fill="none" stroke="#eee" stroke-width="1.200"/></svg>
        <svg class="small" viewBox="0 0 12 16"><path d="M2 9q4-6 10-6M4 11q3-5 8-5M6 13q2-4 6-4" fill="none" stroke="#888"/><circle cx="4" cy="11" r="4" fill="#d8252b"/><path d="M2.500 9.500l3 3M5.500 9.500l-3 3" stroke="#fff"/></svg>
        <svg class="small" viewBox="0 0 12 16"><path d="M.5 4.500h10v7H.5z" fill="none" stroke="#eee"/><path d="M1 5h6v6H1zM11 7h1v3h-1z" fill="#eee"/></svg>
        <svg class="small" viewBox="0 0 14 16"><path d="M.5 6.500h2l3-3v9l-3-3h-2zM7 6q1 2 0 4M9 4q3 4 0 8M11 3q4 5 0 10" fill="none" stroke="#eee"/></svg>
        <span>ENG</span>
        <time datetime="2019-05-31T19:06"><span>19:06</span><span>31-05-2019</span></time>
        <svg class="note" viewBox="0 0 16 16"><path d="M1.500 1.500h13v10h-4l-2.500 3v-3H1.500z" fill="none" stroke="#eee"/></svg>
      </div>
    </div>

    <!-- Recorder watermark -->
    <div class="watermark">
      <svg viewBox="0 0 30 26"><circle cx="12" cy="10" r="8" fill="none" stroke="#fff" stroke-width="4"/><path d="M22 8l7-4v12l-7-4zM6 22h12" fill="#fff" stroke="#fff" stroke-width="2"/></svg>
      <div><small>Apowersoft</small><span>Screen Recorder</span></div>
    </div>
  </body>
</html>
```
FILE: styles.css
```css
* {
  box-sizing: border-box;
}
body {
  margin: 0;
  height: 100vh;
  display: flex;
  flex-direction: column;
  overflow: hidden;
  background-color: #dfeef3;
  font-family: "Liberation Sans", Arial, sans-serif;
  font-size: 10px;
  color: #222;
}
button {
  padding: 0;
  border: none;
  background: none;
  font: inherit;
  color: inherit;
  display: flex;
  align-items: center;
  justify-content: center;
}
svg {
  display: block;
  flex: none;
}

/* Title bar and menu */
.titlebar {
  display: flex;
  align-items: center;
  height: 19px;
  padding: 0 2px 0 1px;
  background-color: #fff;
}
.app-icon {
  width: 14px;
  height: 14px;
}
.title {
  margin: 0 auto 0 3px;
  font: 10px Roboto, sans-serif;
}
.window-buttons {
  display: flex;
}
.window-buttons button {
  width: 39px;
  height: 19px;
}
.window-buttons svg,
.tab button svg {
  width: 10px;
  height: 10px;
}
.menubar {
  display: flex;
  align-items: center;
  gap: 9px;
  height: 17px;
  padding-left: 5px;
  background-color: #fff;
  font: 10px Roboto, sans-serif;
}
.menubar a {
  color: #222;
  text-decoration: none;
}

/* Toolbars */
.toolbars {
  display: flex;
  gap: 4px;
  height: 23px;
  background-color: #e7f4f9;
}
.toolbar {
  display: flex;
  align-items: center;
  padding: 0 2px 0 8px;
  background: linear-gradient(#e6f4fa, #cfe6f1 50%, #b4d8e9);
  position: relative;
}
.toolbar::before {
  content: "";
  position: absolute;
  left: 3px;
  top: 2px;
  bottom: 2px;
  border-left: 1px dotted #7796a6;
}
.toolbar button {
  width: 21px;
  height: 21px;
}
.toolbar svg,
.modebar svg {
  width: 16px;
  height: 16px;
}
.separator {
  width: 6px;
  height: 17px;
  border-left: 1px solid #a3bcc8;
  border-right: 4px solid transparent;
}
.pressed {
  background-color: #bcd9e8;
  border: 1px solid #7da2b4;
}
.variant {
  position: relative;
}
.variant select {
  appearance: none;
  display: block;
  width: 82px;
  height: 17px;
  padding: 0 2px;
  border: 1px solid #adadad;
  border-radius: 0;
  background-color: #e0e2e3;
  font: 10px "Liberation Sans", Arial, sans-serif;
  color: #222;
}
.toolbar .variant svg {
  position: absolute;
  right: 3px;
  top: 5px;
  width: 8px;
  height: 8px;
}

/* Tabs */
.tabstrip {
  display: flex;
  align-items: flex-end;
  height: 28px;
  padding-left: 13px;
  border-bottom: 4px solid #b4d3e2;
  background: linear-gradient(90deg, #dbebef, #e2f0f0 60%, #e4f1f8);
  box-shadow: inset 0 -1px #7ea6ba;
}
.tab {
  position: relative;
  display: flex;
  align-items: center;
  height: 21px;
  padding: 0 8px 0 4px;
  border: 1px solid #8bb0c4;
  border-bottom: none;
  border-left: none;
  background: linear-gradient(#e6f3f9, #b9daea);
  font-weight: bold;
  color: #12384c;
}
.tab::before {
  content: "";
  position: absolute;
  left: -8px;
  top: -1px;
  width: 16px;
  height: 21px;
  border: 1px solid #8bb0c4;
  border-right: none;
  border-bottom: none;
  background: linear-gradient(#e6f3f9, #b9daea);
  transform: skewX(-38deg);
}
.tab > * {
  position: relative;
}
.tab-icon {
  width: 11px;
  height: 13px;
  margin-right: 4px;
}
.tab button {
  margin-left: 4px;
}

/* Workspace */
.workspace {
  display: flex;
  flex: 1;
  min-height: 0;
  padding-right: 2px;
  background-color: #b9d5e2;
}
.modes {
  width: 26px;
  background-color: #e0eef4;
}
.modebar {
  display: flex;
  flex-direction: column;
  padding: 7px 0 2px 2px;
  border-bottom: 1px solid #a9c6d4;
  background: linear-gradient(90deg, #e6f4fa, #b8d9e9);
  position: relative;
}
.modebar::before {
  content: "";
  position: absolute;
  left: 2px;
  right: 2px;
  top: 3px;
  border-top: 1px dotted #7796a6;
}
.rotation {
  margin-top: 13px;
}
.modebar button {
  width: 21px;
  height: 20px;
}
.modebar .separator {
  width: 21px;
  height: 2px;
  border: none;
  border-top: 1px solid #9dbac8;
}
.modebar input {
  width: 22px;
  height: 14px;
  margin-bottom: 2px;
  padding: 0;
  border: 1px solid #777;
  background-color: #fff;
  font: 9px "Liberation Sans", Arial, sans-serif;
}
.modebar .glyph {
  font: 18px "Liberation Serif", serif;
  color: #111;
}
.sidebar {
  display: flex;
  flex-direction: column;
  width: 80px;
}
.overview {
  width: 80px;
  height: 67px;
  border: 1px solid #8a9ba0;
  background-color: #deded0;
}
.list-head {
  display: flex;
  align-items: center;
  gap: 10px;
  height: 16px;
  margin-top: 3px;
  padding-left: 2px;
  background: linear-gradient(#e6f4fa, #b8d9e9);
}
.list-head button {
  width: 10px;
  height: 10px;
  border-radius: 2px;
  background-color: #1055cc;
  color: #fff;
  font-size: 9px;
  font-weight: bold;
}
.list-head label {
  font-size: 9px;
}
.terminals {
  flex: 1;
  padding: 0;
  border: 1px solid #40708a;
  border-top: none;
  border-radius: 0;
  background-color: #fff;
  outline: none;
  overflow: hidden;
  font: 9px/11px "Liberation Sans", Arial, sans-serif;
  color: #222;
}
.terminals option {
  height: 11px;
  min-height: 11px;
  padding: 0 1px;
}
.terminals option:checked {
  background: #0078d0 linear-gradient(#0078d0, #0078d0);
  color: #fff;
}

/* Schematic sheet */
.sheet {
  flex: 1;
  min-width: 0;
  margin-left: 3px;
  border: 1px solid #8a9ba0;
  border-top: none;
  background-color: #deded0;
}
.schematic {
  width: 100%;
  height: 100%;
  font-family: "Liberation Sans", Arial, sans-serif;
}
.wires {
  fill: none;
  stroke: #0e400e;
  stroke-width: 1.3;
}
.pin {
  stroke: #a02020;
}
.part {
  fill: #c6c6a2;
  stroke: #8a0f0f;
  stroke-width: 1.4;
}
.logic {
  font: bold 13px Roboto, sans-serif;
  fill: #dfe0ff;
  text-anchor: middle;
}
.names {
  font-size: 10px;
  fill: #222;
}
.types {
  font-size: 7px;
  fill: #222;
}
.pins-left {
  text-anchor: end;
}
.caption {
  font: bold 20px "Liberation Serif", serif;
  fill: #000;
  stroke: #000;
  stroke-width: .6;
}
.formula {
  font: bold 19px "Liberation Serif", serif;
  fill: #4b12c0;
  stroke: #4b12c0;
  stroke-width: .6;
}
.index {
  font-size: 15px;
  fill: #dc1c24;
  stroke: #dc1c24;
}

/* Status bar */
.statusbar {
  display: flex;
  align-items: center;
  height: 25px;
  border-top: 1px solid #8a9ba0;
  border-bottom: 1px solid #7f97a3;
  background: linear-gradient(#e6f4fa, #d2e8f2 50%, #b4d8e9);
  font-size: 9px;
}
.controls {
  display: flex;
  gap: 14px;
  padding-left: 14px;
}
.statusbar svg {
  width: 16px;
  height: 16px;
}
.messages {
  gap: 4px;
  margin-left: 7px;
  padding-left: 7px;
  border-left: 1px solid #a3bcc8;
}
.sim {
  width: 273px;
  margin-left: 7px;
  padding-left: 6px;
  border-left: 1px dotted #7796a6;
  border-right: 1px solid #a3bcc8;
  line-height: 21px;
  color: #175217;
}
.coord {
  flex: 1;
  text-align: right;
}
.unit {
  margin-left: 15px;
  color: #1a1aa0;
}

/* Taskbar */
.taskbar {
  display: flex;
  height: 33px;
  background-color: #2b2624;
  color: #eee;
  font-family: Roboto, sans-serif;
}
.start {
  width: 40px;
  background-color: #241e1c;
}
.start svg {
  width: 14px;
  height: 14px;
}
.search {
  display: flex;
  align-items: center;
  width: 287px;
  padding: 0 10px 0 7px;
  background-color: #f2f2f2;
}
.cortana {
  width: 18px;
  height: 18px;
}
.search input {
  flex: 1;
  min-width: 0;
  padding: 0 8px;
  border: none;
  background: none;
  font: 12px Roboto, sans-serif;
}
.search input::placeholder {
  color: #444;
}
.mic {
  width: 12px;
  height: 16px;
}
.app {
  width: 41px;
  background-color: #0d0d12;
  border-bottom: 2px solid #0d0d12;
}
.app svg {
  width: 19px;
  height: 19px;
}
.open {
  background-color: #2a1e18;
  border-bottom-color: #6aaee8;
}
.active {
  background-color: #3e4145;
}
.recorder {
  display: flex;
  width: 409px;
  margin-left: 30px;
  overflow: hidden;
  background-color: #fff;
  color: #333;
}
.rec-buttons {
  display: flex;
  gap: 12px;
  width: 102px;
  padding: 7px 0 0 14px;
  border-radius: 0 36px 0 0;
  background-color: #303030;
}
.rec-buttons button,
.rec-buttons svg {
  width: 32px;
  height: 32px;
}
.rec-time {
  display: flex;
  flex-direction: column;
  width: 100px;
  height: 40px;
  margin: 4px 10px 0 25px;
  padding-left: 6px;
  border-radius: 4px;
  background-color: #f1f1f1;
  font: 11px/16px "Open Sans", sans-serif;
}
.rec-time b {
  font: bold 14px/20px "Liberation Sans", Arial, sans-serif;
  color: #111;
}
.level {
  width: 90px;
  height: 32px;
}
.webcam {
  width: 20px;
  height: 24px;
  margin: 12px 0 0 9px;
}
.pen {
  width: 20px;
  height: 20px;
  margin: 13px 0 0 14px;
}
.tray {
  display: flex;
  flex: 1;
  align-items: center;
  justify-content: flex-end;
  gap: 7px;
  padding-right: 18px;
  font-size: 10px;
}
.tray svg {
  width: 20px;
  height: 20px;
  margin-right: 7px;
}
.tray .small {
  width: 14px;
  height: 16px;
  margin-right: 0;
}
.tray time {
  display: flex;
  flex-direction: column;
  align-items: center;
  line-height: 15px;
}
.tray .note {
  width: 16px;
  height: 16px;
  margin: 0 0 0 7px;
}

/* Watermark */
.watermark {
  position: absolute;
  top: 13px;
  right: 11px;
  display: flex;
  align-items: center;
  gap: 6px;
  color: #fff;
  font-family: "Open Sans", sans-serif;
  font-weight: bold;
  filter: drop-shadow(0 0 1px #ddd);
  pointer-events: none;
}
.watermark svg {
  width: 30px;
  height: 26px;
}
.watermark div {
  display: flex;
  flex-direction: column;
}
.watermark small {
  font-size: 9px;
  line-height: 12px;
}
.watermark span {
  font-size: 14px;
  line-height: 16px;
}
```
